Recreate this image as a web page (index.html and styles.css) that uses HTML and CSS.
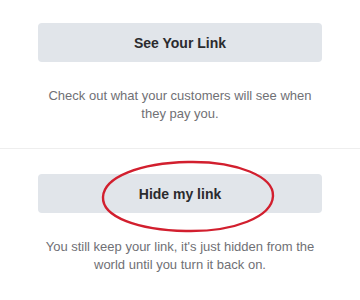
FILE: index.html
```html
<!DOCTYPE html>
<html>
<head>
<meta charset="utf-8">
<link rel="stylesheet" href="styles.css">
</head>
<body>
<div class="page">
  <section class="block">
    <button class="btn">See Your Link</button>
    <p class="desc">Check out what your customers will see when they pay you.</p>
  </section>
  <section class="block divided">
    <div class="btn-wrap">
      <button class="btn">Hide my link</button>
      <svg class="circle" width="180" height="76" viewBox="0 0 180 76">
        <path d="M90 3 C 140 2, 176 18, 175 37 C 174 58, 136 73, 88 72 C 40 71, 4 58, 5 38 C 6 18, 42 4, 90 3 Z" fill="none" stroke="#d21f2e" stroke-width="2.4"/>
      </svg>
    </div>
    <p class="desc">You still keep your link, it's just hidden from the world until you turn it back on.</p>
  </section>
</div>
</body>
</html>
```
FILE: styles.css
```css
html, body {
  margin: 0;
  padding: 0;
  background: #ffffff;
}
.page {
  width: 360px;
  font-family: "Liberation Sans", Arial, sans-serif;
}
.block {
  display: flex;
  flex-direction: column;
  align-items: center;
  padding: 23px 38px 25px;
  gap: 25px;
}
.divided {
  border-top: 1px solid #eeeeee;
  padding-top: 25px;
}
.btn-wrap {
  position: relative;
  width: 100%;
}
.btn {
  display: block;
  width: 100%;
  height: 39px;
  border: none;
  border-radius: 4px;
  background: #e1e5ea;
  color: #2b2b2e;
  font-family: "Liberation Sans", Arial, sans-serif;
  font-weight: bold;
  font-size: 14px;
  padding: 0;
}
.circle {
  position: absolute;
  left: 60px;
  top: -15px;
  pointer-events: none;
}
.desc {
  margin: 0;
  text-align: center;
  font-size: 13px;
  line-height: 18px;
  color: #707075;
}
```
